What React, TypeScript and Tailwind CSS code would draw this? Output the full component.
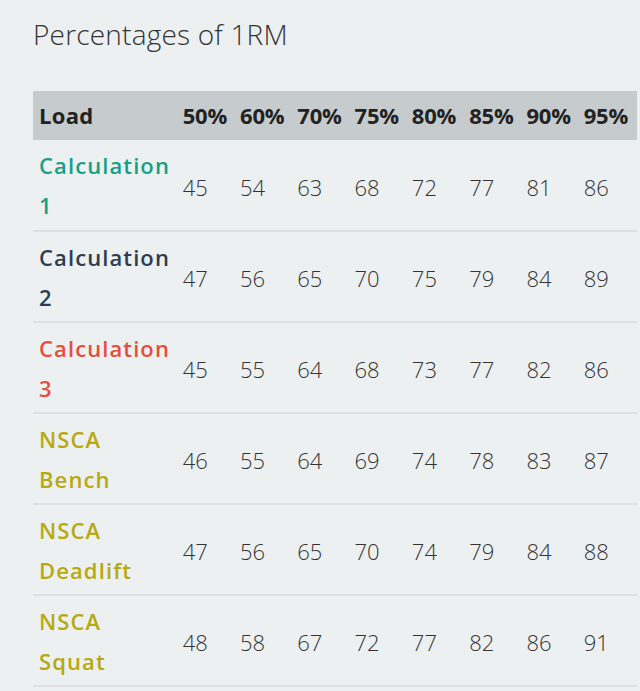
const pcts = ["50%", "60%", "70%", "75%", "80%", "85%", "90%", "95%"];

const rows = [
  { name: ["Calculation", "1"], color: "text-[#16a085]", values: [45, 54, 63, 68, 72, 77, 81, 86] },
  { name: ["Calculation", "2"], color: "text-[#2c3e50]", values: [47, 56, 65, 70, 75, 79, 84, 89] },
  { name: ["Calculation", "3"], color: "text-[#e74c3c]", values: [45, 55, 64, 68, 73, 77, 82, 86] },
  { name: ["NSCA", "Bench"], color: "text-[#b8a90f]", values: [46, 55, 64, 69, 74, 78, 83, 87] },
  { name: ["NSCA", "Deadlift"], color: "text-[#b8a90f]", values: [47, 56, 65, 70, 74, 79, 84, 88] },
  { name: ["NSCA", "Squat"], color: "text-[#b8a90f]", values: [48, 58, 67, 72, 77, 82, 86, 91] },
];

export default function App() {
  return (
    <div className="min-h-[691px] w-[640px] overflow-hidden bg-[#ecf0f1] font-['Open_Sans','Lato',sans-serif] text-[#2b2b2b]">
      <div className="pl-[33px] pt-[14px]">
        <h1 className="text-[28px] font-light leading-[40px] tracking-[0.2px] text-[#333]">Percentages of 1RM</h1>

        <table className="mt-[37px] w-[604px] table-fixed border-collapse">
          <colgroup>
            <col className="w-[145px]" />
            {pcts.map((p) => (
              <col key={p} className="w-[57px]" />
            ))}
          </colgroup>
          <thead>
            <tr className="h-[49px] bg-[#c6cbce]">
              <th className="pl-[6px] text-left text-[22px] font-bold tracking-[0.3px] text-[#222]">Load</th>
              {pcts.map((p) => (
                <th key={p} className="pl-[4px] text-left text-[22px] font-bold tracking-[-0.2px] text-[#222]">
                  {p}
                </th>
              ))}
            </tr>
          </thead>
          <tbody>
            {rows.map((row) => (
              <tr key={row.name.join(" ")} className="h-[91px] border-b-2 border-[#dde1e3]">
                <td className={`pl-[6px] align-middle text-[22px] font-semibold leading-[40px] tracking-[1.1px] ${row.color}`}>
                  {row.name[0]}
                  <br />
                  {row.name[1]}
                </td>
                {row.values.map((v, i) => (
                  <td key={i} className="pl-[4px] pt-[4px] align-middle text-[22px] font-light text-[#333]">
                    {v}
                  </td>
                ))}
              </tr>
            ))}
          </tbody>
        </table>
      </div>
    </div>
  );
}
